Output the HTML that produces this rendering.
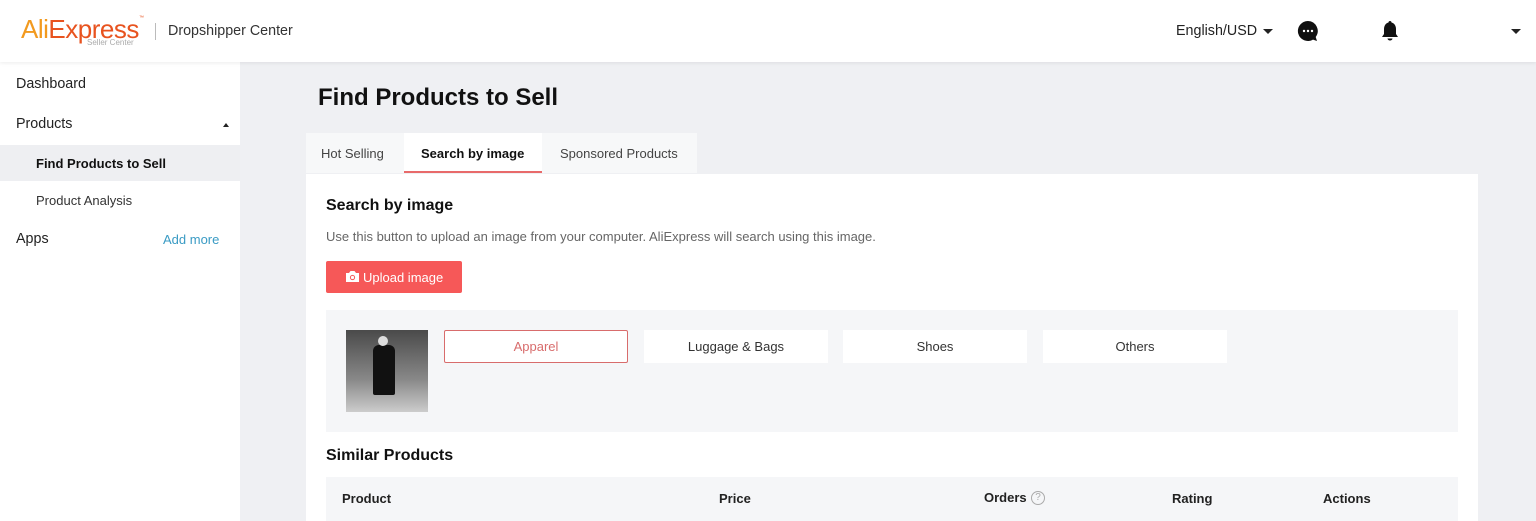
<!DOCTYPE html>
<html><head><meta charset="utf-8"><style>
*{margin:0;padding:0;box-sizing:border-box}
body{width:1536px;height:521px;overflow:hidden;background:#eff0f3;font-family:"Liberation Sans",Arial,sans-serif;color:#222;position:relative}
.abs{position:absolute}
.hdr{left:0;top:0;width:1536px;height:62px;background:#fff;box-shadow:0 1px 4px rgba(0,0,0,.08);z-index:2}
.side{left:0;top:62px;width:240px;height:459px;background:#fff}
.t{position:absolute;white-space:nowrap}
</style></head><body>
<div class="abs hdr">
  <div class="t" style="left:21px;top:14px;font-size:26px;letter-spacing:-0.5px;color:#e8531f"><span style="color:#f29a1f">Ali</span>Express</div>
  <div class="t" style="left:139px;top:15px;font-size:5px;color:#e8531f">™</div>
  <div class="t" style="left:87px;top:38px;font-size:8px;color:#aaa">Seller Center</div>
  <div class="abs" style="left:155px;top:23px;width:1px;height:17px;background:#bbb"></div>
  <div class="t" style="left:168px;top:23px;font-size:14.3px;color:#333">Dropshipper Center</div>
  <div class="t" style="left:1176px;top:23px;font-size:14.3px;color:#222">English/USD</div>
  <div class="abs" style="left:1263px;top:29px;border:5px solid transparent;border-top:5px solid #222;border-bottom:0"></div>
  <svg class="abs" style="left:1297px;top:20px" width="22" height="22" viewBox="0 0 22 22"><path d="M11 1a10 10 0 1 0 5 18.6L20 21l-1.3-4A10 10 0 0 0 11 1z" fill="#111"/><circle cx="7" cy="11" r="1.2" fill="#fff"/><circle cx="11" cy="11" r="1.2" fill="#fff"/><circle cx="15" cy="11" r="1.2" fill="#fff"/></svg>
  <svg class="abs" style="left:1380px;top:20px" width="20" height="22" viewBox="0 0 20 22"><path d="M10 1c-1 0-1.5.7-1.5 1.5C5.5 3.3 4 6 4 9v5l-2 3h16l-2-3V9c0-3-1.5-5.7-4.5-6.5C11.5 1.7 11 1 10 1z" fill="#111"/><path d="M7.5 18.5a2.5 2 0 0 0 5 0z" fill="#111"/></svg>
  <div class="abs" style="left:1511px;top:29px;border:5px solid transparent;border-top:5px solid #222;border-bottom:0"></div>
</div>
<div class="abs side">
  <div class="t" style="left:16px;top:14px;font-size:14.3px">Dashboard</div>
  <div class="t" style="left:16px;top:54px;font-size:14.3px">Products</div>
  <div class="abs" style="left:223px;top:61px;border:3px solid transparent;border-bottom:4px solid #222;border-top:0"></div>
  <div class="abs" style="left:0;top:83px;width:240px;height:36px;background:#eeeff2"></div>
  <div class="t" style="left:36px;top:94px;font-size:13px;font-weight:bold;color:#111">Find Products to Sell</div>
  <div class="t" style="left:36px;top:131px;font-size:13px;color:#333">Product Analysis</div>
  <div class="t" style="left:16px;top:169px;font-size:14.3px">Apps</div>
  <div class="t" style="left:163px;top:170px;font-size:13px;color:#3a9bc4">Add more</div>
</div>
<div class="t" style="left:318px;top:84px;font-size:24px;font-weight:bold;color:#111">Find Products to Sell</div>
<div class="abs" style="left:306px;top:133px;width:391px;height:40px;background:#f7f8f9"></div>
<div class="t" style="left:321px;top:146px;font-size:13px;color:#444">Hot Selling</div>
<div class="abs" style="left:404px;top:133px;width:138px;height:40px;background:#fff;border-bottom:2px solid #e86a6a"></div>
<div class="t" style="left:421px;top:146px;font-size:13px;font-weight:bold;color:#111">Search by image</div>
<div class="t" style="left:560px;top:146px;font-size:13px;color:#444">Sponsored Products</div>
<div class="abs" style="left:306px;top:174px;width:1172px;height:347px;background:#fff"></div>
<div class="t" style="left:326px;top:197px;font-size:16px;font-weight:bold;color:#111">Search by image</div>
<div class="t" style="left:326px;top:229px;font-size:13px;color:#666">Use this button to upload an image from your computer. AliExpress will search using this image.</div>
<div class="abs" style="left:326px;top:261px;width:136px;height:32px;background:#f65858;border-radius:2px"></div>
<svg class="abs" style="left:345px;top:270px" width="15" height="13" viewBox="0 0 15 13"><path d="M1 3h3l1.5-2h4L11 3h3v9H1z" fill="#fff"/><circle cx="7.5" cy="7.5" r="2.6" fill="#f65858"/><circle cx="7.5" cy="7.5" r="1.6" fill="#fff"/></svg>
<div class="t" style="left:363px;top:270px;font-size:13px;color:#fff">Upload image</div>
<div class="abs" style="left:326px;top:310px;width:1132px;height:122px;background:#f5f6f8"></div>
<div class="abs" style="left:346px;top:330px;width:82px;height:82px;background:linear-gradient(180deg,#4a4a4a,#888 60%,#ccc)"></div>
<div class="abs" style="left:373px;top:345px;width:22px;height:50px;background:#111;border-radius:6px 6px 2px 2px"></div>
<div class="abs" style="left:378px;top:336px;width:10px;height:10px;background:#ddd;border-radius:50%"></div>
<div class="abs" style="left:444px;top:330px;width:184px;height:33px;background:#fff;border:1px solid #d86c6c;border-radius:2px"></div>
<div class="t" style="left:444px;top:339px;width:184px;text-align:center;font-size:13px;color:#d86c6c">Apparel</div>
<div class="abs" style="left:644px;top:330px;width:184px;height:33px;background:#fff"></div>
<div class="t" style="left:644px;top:339px;width:184px;text-align:center;font-size:13px;color:#333">Luggage &amp; Bags</div>
<div class="abs" style="left:843px;top:330px;width:184px;height:33px;background:#fff"></div>
<div class="t" style="left:843px;top:339px;width:184px;text-align:center;font-size:13px;color:#333">Shoes</div>
<div class="abs" style="left:1043px;top:330px;width:184px;height:33px;background:#fff"></div>
<div class="t" style="left:1043px;top:339px;width:184px;text-align:center;font-size:13px;color:#333">Others</div>
<div class="t" style="left:326px;top:447px;font-size:16px;font-weight:bold;color:#111">Similar Products</div>
<div class="abs" style="left:326px;top:477px;width:1132px;height:44px;background:#f5f6f8"></div>
<div class="t" style="left:342px;top:491px;font-size:13px;font-weight:bold;color:#222">Product</div>
<div class="t" style="left:719px;top:491px;font-size:13px;font-weight:bold;color:#222">Price</div>
<div class="t" style="left:984px;top:490px;font-size:13px;font-weight:bold;color:#222">Orders</div>
<div class="abs" style="left:1031px;top:491px;width:14px;height:14px;border:1px solid #aaa;border-radius:50%;font-size:10px;color:#aaa;text-align:center;line-height:12px">?</div>
<div class="t" style="left:1172px;top:491px;font-size:13px;font-weight:bold;color:#222">Rating</div>
<div class="t" style="left:1323px;top:491px;font-size:13px;font-weight:bold;color:#222">Actions</div>
</body></html>
